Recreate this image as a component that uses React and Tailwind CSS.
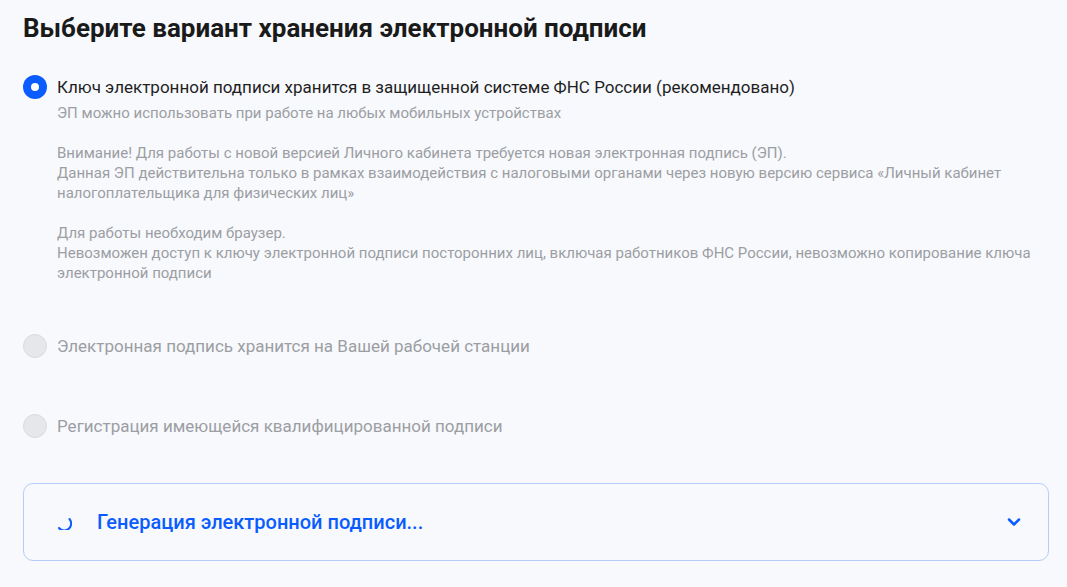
import { ChevronDown } from "lucide-react";

const Radio = ({ checked }) =>
  checked ? (
    <span className="flex size-6 shrink-0 items-center justify-center rounded-full bg-[#0b5cff]">
      <span className="size-2 rounded-full bg-white" />
    </span>
  ) : (
    <span className="size-6 shrink-0 rounded-full border border-[#d9dbe0] bg-[#e6e7ea]" />
  );

const Option = ({ checked, label, children }) => (
  <div className="flex gap-[10px]">
    <Radio checked={checked} />
    <div className="min-w-0">
      <div className={`text-[17px] leading-6 ${checked ? "text-[#1f1f1f]" : "text-[#9c9ea3]"}`}>{label}</div>
      {children}
    </div>
  </div>
);

export default function App() {
  return (
    <div className="min-h-screen bg-[#f7f9fd] pl-[23px] pr-[18px] pt-[12px] pb-6 font-['Roboto',sans-serif]">
      <h1 className="text-[26px] font-bold leading-8 text-[#1a1a1a]">
        Выберите вариант хранения электронной подписи
      </h1>

      <div className="mt-[31px] flex flex-col">
        <Option checked label="Ключ электронной подписи хранится в защищенной системе ФНС России (рекомендовано)">
          <div className="mt-1 text-[15px] leading-5 text-[#9c9ea3]">
            <p>ЭП можно использовать при работе на любых мобильных устройствах</p>
            <p className="mt-5">Внимание! Для работы с новой версией Личного кабинета требуется новая электронная подпись (ЭП).</p>
            <p>
              Данная ЭП действительна только в рамках взаимодействия с налоговыми органами через новую версию сервиса «Личный кабинет
              налогоплательщика для физических лиц»
            </p>
            <p className="mt-5">Для работы необходим браузер.</p>
            <p>
              Невозможен доступ к ключу электронной подписи посторонних лиц, включая работников ФНС России, невозможно копирование ключа
              электронной подписи
            </p>
          </div>
        </Option>

        <div className="mt-[51px]">
          <Option label="Электронная подпись хранится на Вашей рабочей станции" />
        </div>
        <div className="mt-14">
          <Option label="Регистрация имеющейся квалифицированной подписи" />
        </div>
      </div>

      <div className="mt-[45px] flex h-[78px] items-center rounded-[10px] border border-[#b6cdfb] pl-[32px] pr-[24px]">
        <svg width="16" height="16" viewBox="0 0 16 16" className="shrink-0 text-[#0b5cff]">
          <path d="M13.5 5 A6.5 6.5 0 0 1 3 14" fill="none" stroke="currentColor" strokeWidth="2" strokeLinecap="round" />
        </svg>
        <span className="ml-[25px] flex-1 text-[20px] font-medium text-[#0b5cff]">Генерация электронной подписи...</span>
        <ChevronDown className="size-5 text-[#0b5cff]" strokeWidth={3} />
      </div>
    </div>
  );
}
